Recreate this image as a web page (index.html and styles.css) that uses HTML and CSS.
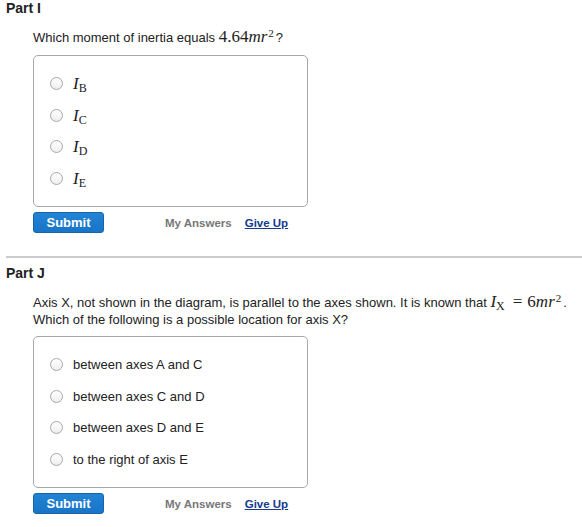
FILE: index.html
```html
<!DOCTYPE html>
<html>
<head>
<meta charset="utf-8">
<link rel="stylesheet" href="styles.css">
</head>
<body>
<section class="part">
  <h2 class="part-title">Part I</h2>
  <div class="part-body">
    <p class="prompt">Which moment of inertia equals <span class="math"><span class="num">4.64</span><i>m</i><i>r</i><sup>2</sup></span>?</p>
    <div class="choices">
      <label class="choice"><span class="radio"></span><span class="math"><i>I</i><sub>B</sub></span></label>
      <label class="choice"><span class="radio"></span><span class="math"><i>I</i><sub>C</sub></span></label>
      <label class="choice"><span class="radio"></span><span class="math"><i>I</i><sub>D</sub></span></label>
      <label class="choice"><span class="radio"></span><span class="math"><i>I</i><sub>E</sub></span></label>
    </div>
    <div class="actions">
      <button class="submit">Submit</button>
      <span class="my-answers">My Answers</span>
      <a class="give-up" href="#">Give Up</a>
    </div>
  </div>
</section>
<hr class="divider">
<section class="part">
  <h2 class="part-title">Part J</h2>
  <div class="part-body">
    <p class="prompt prompt-two">Axis X, not shown in the diagram, is parallel to the axes shown. It is known that <span class="math"><i>I</i><sub>X</sub><span class="op">=</span><span class="num">6</span><i>m</i><i>r</i><sup>2</sup></span>.<br>Which of the following is a possible location for axis X?</p>
    <div class="choices">
      <label class="choice"><span class="radio"></span><span class="label-text">between axes A and C</span></label>
      <label class="choice"><span class="radio"></span><span class="label-text">between axes C and D</span></label>
      <label class="choice"><span class="radio"></span><span class="label-text">between axes D and E</span></label>
      <label class="choice"><span class="radio"></span><span class="label-text">to the right of axis E</span></label>
    </div>
    <div class="actions">
      <button class="submit">Submit</button>
      <span class="my-answers">My Answers</span>
      <a class="give-up" href="#">Give Up</a>
    </div>
  </div>
</section>
</body>
</html>
```

FILE: styles.css
```css
html, body {
  margin: 0;
  padding: 0;
  background: #ffffff;
}

body {
  font-family: "Liberation Sans", Arial, sans-serif;
  font-size: 13px;
  color: #222222;
}

.part-title {
  margin: 0;
  padding-left: 6px;
  font-size: 14px;
  line-height: 16px;
  font-weight: bold;
  color: #222222;
}

.part-body {
  padding-left: 33px;
}

.prompt {
  margin: 12px 0 8px;
  line-height: 18px;
}

.prompt-two {
  line-height: 17px;
  margin-bottom: 8px;
}

.math {
  font-family: "Liberation Serif", "Times New Roman", serif;
  font-size: 17px;
  line-height: 1;
  margin-right: 2px;
}

.math i {
  font-style: italic;
}

.math sup {
  font-size: 11px;
  line-height: 0;
  vertical-align: 5px;
  margin-left: 1px;
}

.math sub {
  font-size: 12px;
  line-height: 0;
  vertical-align: -3px;
}

.math .op {
  margin: 0 5px 0 8px;
}

.choices {
  box-sizing: border-box;
  width: 275px;
  border: 1px solid #a9a9a9;
  border-radius: 5px;
  padding: 12px 16px;
}

.choice {
  display: flex;
  align-items: center;
  gap: 10px;
  height: 31.5px;
}

.radio {
  box-sizing: border-box;
  width: 13px;
  height: 13px;
  border-radius: 50%;
  border: 1px solid #a8a8a8;
  background: linear-gradient(#ffffff, #eeeeee);
  flex: none;
}

.label-text {
  font-size: 13px;
  color: #222222;
}

.actions {
  display: flex;
  align-items: center;
  margin-top: 5px;
  height: 21px;
}

.submit {
  box-sizing: border-box;
  width: 71px;
  height: 21px;
  margin: 0;
  padding: 0;
  border: 1px solid #1565a8;
  border-radius: 3px;
  background: linear-gradient(#2283d5, #1874c6);
  color: #ffffff;
  font-family: "Liberation Sans", Arial, sans-serif;
  font-size: 13px;
  font-weight: bold;
  line-height: 19px;
}

.my-answers {
  margin-left: 61px;
  font-size: 11.5px;
  font-weight: bold;
  color: #777777;
}

.give-up {
  margin-left: 13px;
  font-size: 11.5px;
  font-weight: bold;
  color: #153a8e;
  text-decoration: underline;
}

.divider {
  margin: 23px 0 7px 6px;
  border: 0;
  height: 2px;
  background: #cccccc;
}
```
